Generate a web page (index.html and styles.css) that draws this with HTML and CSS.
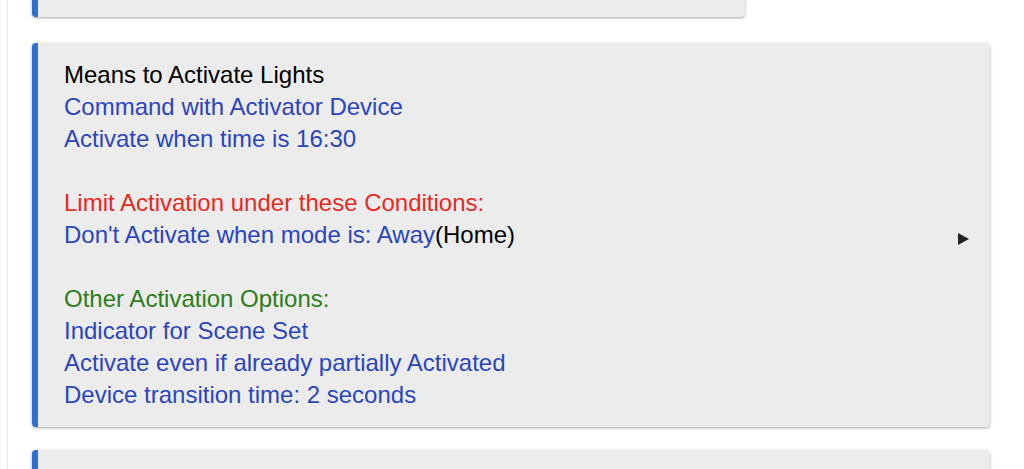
FILE: index.html
```html
<!DOCTYPE html>
<html>
<head>
    <link rel="stylesheet" href="styles.css">
</head>
<body>
    <div class="page">
        <div class="card card-short"></div>

        <div class="card">
            <div class="lines">
                <div class="title">Means to Activate Lights</div>
                <div class="blue">Command with Activator Device</div>
                <div class="blue">Activate when time is 16:30</div>
                <div class="blank"></div>
                <div class="red">Limit Activation under these Conditions:</div>
                <div class="blue">Don't Activate when mode is: Away<span class="title">(Home)</span></div>
                <div class="blank"></div>
                <div class="green">Other Activation Options:</div>
                <div class="blue">Indicator for Scene Set</div>
                <div class="blue">Activate even if already partially Activated</div>
                <div class="blue">Device transition time: 2 seconds</div>
            </div>
            <div class="arrow"></div>
        </div>

        <div class="card card-next"></div>
    </div>
</body>
</html>
```

FILE: styles.css
```css
html {
    overflow: hidden;
}

body {
    margin: 0;
    padding-left: 7px;
    background: white;
    font-family: "Liberation Sans", Arial, sans-serif;
    overflow: hidden;
    height: 469px;
}

.page {
    display: flow-root;
    border-left: 1px solid #e8e8e8;
    padding-left: 24px;
    height: 100%;
}

.card {
    width: 958px;
    box-sizing: border-box;
    background: #ececec;
    border-left: 6px solid #2f6fcf;
    border-radius: 4px;
    box-shadow: 0 1px 3px rgba(0,0,0,0.35);
    margin-bottom: 25px;
    padding: 16px 21px 16px 26px;
    display: flex;
    align-items: center;
}

.card-short {
    width: 713px;
    height: 40px;
    margin-top: -23px;
    margin-bottom: 26px;
    padding: 0;
}

.card-next {
    height: 60px;
    margin-top: -2px;
}

.lines {
    flex: 1;
    font-size: 24px;
    line-height: 32px;
}

.blank {
    height: 32px;
}

.title {
    color: #000;
}

.blue {
    color: #2b45bf;
}

.red {
    color: #e8291d;
}

.green {
    color: #2d7d1b;
}

.arrow {
    width: 0;
    height: 0;
    border-top: 6px solid transparent;
    border-bottom: 6px solid transparent;
    border-left: 11px solid #222;
    margin-top: 8px;
}
```
